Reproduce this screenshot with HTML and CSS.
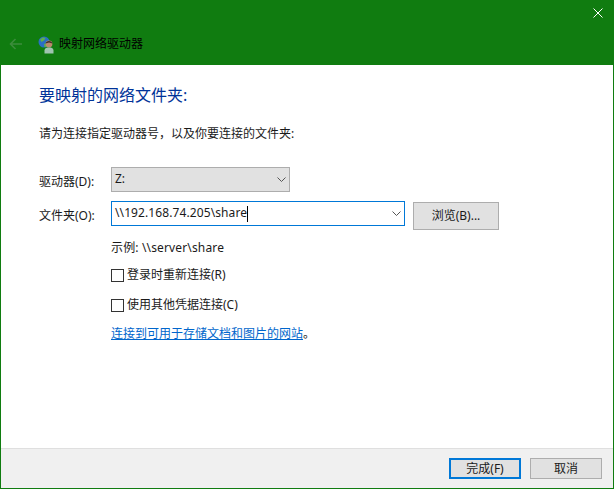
FILE: index.html
```html
<!DOCTYPE html>
<html lang="zh">
<head>
<meta charset="utf-8">
<title>映射网络驱动器</title>
<link rel="stylesheet" href="styles.css">
</head>
<body>
<div class="window">
  <header class="titlebar">
    <div class="caption">
      <svg class="close" width="10" height="10" viewBox="0 0 10 10"><path d="M0.500 0.500L9.500 9.500M9.500 0.500L0.500 9.500" stroke="#fff" stroke-width="1" fill="none"/></svg>
    </div>
    <div class="nav">
      <svg class="back" width="14" height="12" viewBox="0 0 14 12"><path d="M13 6H2M6.500 1L1.500 6L6.500 11" stroke="#3c8c3c" stroke-width="1.600" fill="none"/></svg>
      <svg class="app-icon" width="17" height="18" viewBox="0 0 17 18">
        <circle cx="6" cy="6" r="5.500" fill="#2a6fc4"/>
        <path d="M2 3.500C4 1 6 1 7.500 2L6 4.500L3.500 6ZM6 8L9 7L8.500 11L6.500 11Z" fill="#5db04a"/>
        <circle cx="11" cy="8" r="3.400" fill="#b98a6c"/>
        <path d="M7.500 7.500C8 4 14 4 14.500 7.500L11 6.500Z" fill="#3e3028"/>
        <path d="M6.500 17.500V14.500C6.500 12 9 11.500 11 11.500C13 11.500 15.500 12 15.500 14.500V17.500Z" fill="#9fc4b0"/>
      </svg>
      <span class="title">映射网络驱动器</span>
    </div>
  </header>
  <main class="content">
    <h1 class="heading">要映射的网络文件夹:</h1>
    <p class="intro">请为连接指定驱动器号，以及你要连接的文件夹:</p>
    <div class="form">
      <span class="label">驱动器(D):</span>
      <div class="combo select">
        <span class="combo-text">Z:</span>
        <svg class="chev" width="9" height="5" viewBox="0 0 9 5"><path d="M0.500 0.500L4.500 4.500L8.500 0.500" stroke="#555" fill="none"/></svg>
      </div>
      <span class="spacer"></span>
      <span class="label">文件夹(O):</span>
      <div class="combo edit">
        <span class="edit-text">\\192.168.74.205\share</span><span class="caret"></span>
        <svg class="chev" width="9" height="5" viewBox="0 0 9 5"><path d="M0.500 0.500L4.500 4.500L8.500 0.500" stroke="#555" fill="none"/></svg>
      </div>
      <button class="btn browse" type="button">浏览(B)...</button>
    </div>
    <div class="options">
      <div class="example">示例: \\server\share</div>
      <label class="check first"><span class="box"></span>登录时重新连接(R)</label>
      <label class="check second"><span class="box"></span>使用其他凭据连接(C)</label>
      <div class="linkline"><a class="link" href="#">连接到可用于存储文档和图片的网站</a>。</div>
    </div>
  </main>
  <footer class="footer">
    <button class="btn primary" type="button">完成(F)</button>
    <button class="btn" type="button">取消</button>
  </footer>
</div>
</body>
</html>
```
FILE: styles.css
```css
* { box-sizing: border-box; }
html, body { margin: 0; height: 100%; }
body {
  font-family: "Noto Sans", "Noto Sans CJK SC", sans-serif;
  font-size: 12px;
  color: #1a1a1a;
  background: #fff;
}
.window {
  width: 614px;
  height: 489px;
  display: flex;
  flex-direction: column;
  border: solid #107c10;
  border-width: 0 1px 1px 1px;
  background: #fff;
  overflow: hidden;
}
.titlebar {
  height: 65px;
  margin: 0 -1px;
  background: #107c10;
  display: flex;
  flex-direction: column;
  flex: none;
}
.caption {
  height: 30px;
  display: flex;
  justify-content: flex-end;
  padding: 8px 11px 0 0;
}
.close { display: block; }
.nav {
  display: flex;
  align-items: center;
  height: 28px;
  padding-left: 9px;
}
.back { margin-right: 15px; }
.app-icon { margin-right: 4px; margin-top: 1px; }
.title { color: #000; font-size: 12px; line-height: 16px; }
.content {
  flex: 1;
  padding: 0 0 0 38px;
}
.heading {
  margin: 20px 0 0;
  font-size: 16px;
  font-weight: 400;
  line-height: 21px;
  color: #003399;
}
.intro {
  margin: 20px 0 0;
  line-height: 16px;
}
.form {
  margin-top: 25px;
  display: grid;
  grid-template-columns: 72px 294px 94px;
  grid-template-rows: 25px 29px;
  row-gap: 9px;
  align-items: start;
}
.label { line-height: 16px; padding-top: 7px; }
.combo {
  height: 25px;
  display: flex;
  align-items: center;
  justify-content: space-between;
}
.select {
  width: 179px;
  background: #e1e1e1;
  border: 1px solid #adadad;
  padding: 0 3px 0 3px;
}
.combo-text { line-height: 16px; margin-top: -2px; }
.edit {
  width: 294px;
  border: 1px solid #0078d7;
  padding: 0 3px 0 3px;
}
.edit-text { line-height: 16px; letter-spacing: 0.1px; margin-top: -1px; }
.caret {
  width: 1px;
  height: 16px;
  background: #000;
}
.edit .chev { margin-left: auto; }
.btn {
  font: inherit;
  color: #1a1a1a;
  width: 72px;
  height: 21px;
  padding: 0;
  background: #e1e1e1;
  border: 1px solid #adadad;
  line-height: 16px;
}
.browse {
  width: 86px;
  height: 28px;
  margin: 1px 0 0 8px;
}
.options {
  margin-left: 72px;
  margin-top: 10px;
}
.example { line-height: 16px; letter-spacing: 0.15px; }
.check {
  display: flex;
  align-items: center;
  line-height: 16px;
}
.first { margin-top: 11px; }
.second { margin-top: 14px; }
.box {
  width: 13px;
  height: 13px;
  border: 1px solid #333;
  background: #fff;
  margin-right: 3px;
  flex: none;
}
.linkline { margin-top: 13px; line-height: 16px; }
.link { color: #0066cc; text-decoration: underline; }
.footer {
  flex: none;
  height: 40px;
  background: #f0f0f0;
  border-top: 1px solid #dfdfdf;
  display: flex;
  justify-content: flex-end;
  align-items: flex-start;
  gap: 9px;
  padding: 9px 11px 0 0;
}
.primary { border: 2px solid #0078d7; }
```
